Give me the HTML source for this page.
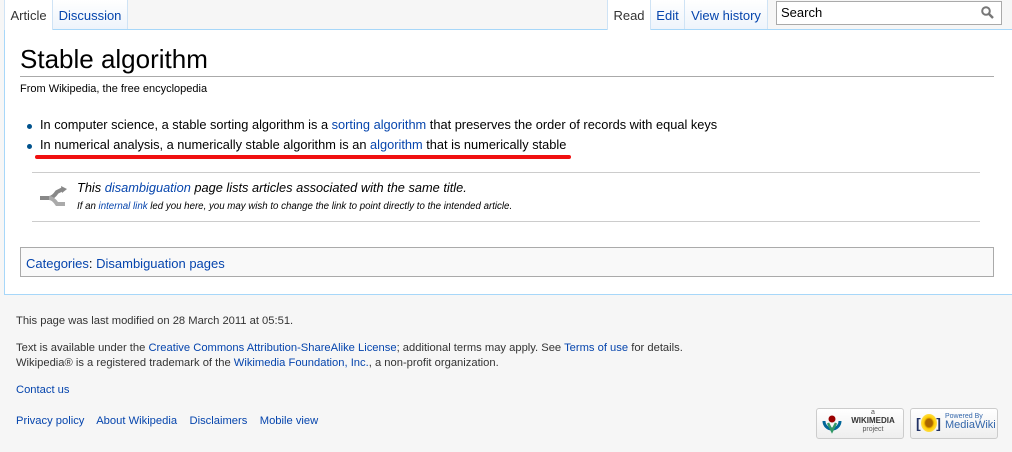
<!DOCTYPE html>
<html><head><meta charset="utf-8"><style>
*{margin:0;padding:0;box-sizing:border-box}
body{width:1012px;height:452px;background:#f6f6f6;font-family:"Liberation Sans",Arial,sans-serif;position:relative;overflow:hidden;color:#000}
a{color:#0645ad;text-decoration:none}
.abs{position:absolute;white-space:nowrap}
.tab{position:absolute;top:0;height:29px;font-size:13px;padding-top:8px;text-align:center;background:linear-gradient(#fff,#eef4fb);border-right:1px solid #cfe3f5}
.tab.sel{background:#fff;color:#333}
#content{position:absolute;left:4px;top:29px;width:1010px;height:266px;background:#fff;border:1px solid #a7d7f9;border-right:none}
.f{font-size:11.2px;color:#333}
</style></head><body>
<div class="tab sel" style="left:4px;width:49px;border-left:1px solid #cfe3f5;height:30px;z-index:2">Article</div>
<div class="tab" style="left:53px;width:75px"><a>Discussion</a></div>
<div class="tab sel" style="left:607px;width:44px;height:30px;z-index:2;border-left:1px solid #cfe3f5">Read</div>
<div class="tab" style="left:651px;width:34px"><a>Edit</a></div>
<div class="tab" style="left:685px;width:83px"><a>View history</a></div>
<div class="abs" style="left:776px;top:1px;width:226px;height:24px;border:1px solid #aaa;background:#fff;font-size:13px;padding:3px 4px">Search
<svg style="position:absolute;right:7px;top:4px" width="13" height="13" viewBox="0 0 13 13"><circle cx="5" cy="5" r="3.8" fill="none" stroke="#777" stroke-width="2"/><line x1="8" y1="8" x2="12" y2="12" stroke="#777" stroke-width="2.4"/></svg></div>
<div id="content"></div>
<div class="abs" style="left:20px;top:44px;font-size:26px">Stable algorithm</div>
<div class="abs" style="left:20px;top:76px;width:974px;border-top:1px solid #aaa"></div>
<div class="abs" style="left:20px;top:83px;font-size:11px">From Wikipedia, the free encyclopedia</div>
<div class="abs" style="left:27px;top:124px;width:5px;height:5px;border-radius:50%;background:#00528c"></div>
<div class="abs" style="left:40px;top:117px;font-size:12.8px">In computer science, a stable sorting algorithm is a <a>sorting algorithm</a> that preserves the order of records with equal keys</div>
<div class="abs" style="left:27px;top:144px;width:5px;height:5px;border-radius:50%;background:#00528c"></div>
<div class="abs" style="left:40px;top:137px;font-size:12.8px">In numerical analysis, a numerically stable algorithm is an <a>algorithm</a> that is numerically stable</div>
<div class="abs" style="left:35px;top:155px;width:536px;height:4px;border-radius:2px;background:#f01010"></div>
<div class="abs" style="left:32px;top:172px;width:948px;border-top:1px solid #ccc"></div>
<div class="abs" style="left:32px;top:221px;width:948px;border-top:1px solid #ccc"></div>
<svg class="abs" style="left:37px;top:185px" width="32" height="25" viewBox="0 0 32 25"><path d="M3 13 H12 Q16 13 20 7 L26 4" stroke="#888" stroke-width="4" fill="none"/><path d="M12 13 Q16 13 20 19 H28" stroke="#aaa" stroke-width="4" fill="none"/><path d="M24 1 L30 4 L25 8Z" fill="#888"/></svg>
<div class="abs" style="left:77px;top:180px;font-size:12.8px;font-style:italic">This <a>disambiguation</a> page lists articles associated with the same title.</div>
<div class="abs" style="left:77px;top:201px;font-size:9.7px;font-style:italic">If an <a>internal link</a> led you here, you may wish to change the link to point directly to the intended article.</div>
<div class="abs" style="left:20px;top:247px;width:974px;height:30px;border:1px solid #aaa;background:#f9f9f9;font-size:13px;padding:8px 5px"><a>Categories</a>: <a>Disambiguation pages</a></div>
<div class="abs f" style="left:16px;top:315px">This page was last modified on 28 March 2011 at 05:51.</div>
<div class="abs f" style="left:16px;top:342px">Text is available under the <a>Creative Commons Attribution-ShareAlike License</a>; additional terms may apply. See <a>Terms of use</a> for details.</div>
<div class="abs f" style="left:16px;top:357px">Wikipedia® is a registered trademark of the <a>Wikimedia Foundation, Inc.</a>, a non-profit organization.</div>
<div class="abs f" style="left:16px;top:384px"><a>Contact us</a></div>
<div class="abs f" style="left:16px;top:415px"><a>Privacy policy</a>&nbsp;&nbsp;&nbsp; <a>About Wikipedia</a>&nbsp;&nbsp;&nbsp; <a>Disclaimers</a>&nbsp;&nbsp;&nbsp; <a>Mobile view</a></div>
<div class="abs" style="left:816px;top:408px;width:88px;height:31px;border:1px solid #ccc;border-radius:3px;background:linear-gradient(#fff,#eee)">
<svg style="position:absolute;left:4px;top:4px" width="22" height="22" viewBox="0 0 22 22"><circle cx="11" cy="6" r="3.5" fill="#900"/><path d="M3 8 A8 8 0 0 0 19 8" stroke="#069" stroke-width="3" fill="none"/><path d="M7 10 L11 18 L15 10" stroke="#396" stroke-width="2.5" fill="none"/></svg>
<div style="position:absolute;left:31px;top:0;font-size:7px;color:#555;width:50px;text-align:center;line-height:8px">a<br><b style="font-size:8px;color:#333">WIKIMEDIA</b><br>project</div></div>
<div class="abs" style="left:910px;top:408px;width:88px;height:31px;border:1px solid #ccc;border-radius:3px;background:linear-gradient(#fff,#eee)">
<div style="position:absolute;left:5px;top:6px;font-size:14px;color:#236;font-weight:bold">[&nbsp;&nbsp;&nbsp;&nbsp;]</div>
<div style="position:absolute;left:10px;top:5px;width:16px;height:18px;border-radius:50%;background:radial-gradient(#a60 30%,#fc0 45%,#fd4 70%)"></div>
<div style="position:absolute;left:34px;top:4px;font-size:7px;color:#36a;line-height:8px">Powered By<br><span style="font-size:11px">MediaWiki</span></div></div>
</body></html>
